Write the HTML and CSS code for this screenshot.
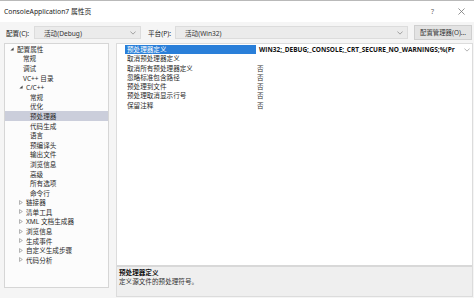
FILE: index.html
```html
<!DOCTYPE html>
<html lang="zh">
<head>
<meta charset="utf-8">
<link rel="stylesheet" href="styles.css">
</head>
<body>
<div class="dialog">
  <div class="titlebar">
    <span class="title">ConsoleApplication7 属性页</span>
    <span class="tb-btns"><span class="help">?</span><svg class="close" viewBox="0 0 8 8" width="7" height="7"><path d="M0.5 0.5 L7.5 7.5 M7.5 0.5 L0.5 7.5" stroke="#777" stroke-width="0.9"/></svg></span>
  </div>
  <div class="configrow">
    <span class="lbl">配置(C):</span>
    <div class="combo combo-cfg"><span>活动(Debug)</span><svg class="chev" viewBox="0 0 8 5" width="6" height="4"><path d="M0.5 0.5 L4 4 L7.5 0.5" fill="none" stroke="#888" stroke-width="1"/></svg></div>
    <span class="lbl lbl-plat">平台(P):</span>
    <div class="combo combo-plat"><span>活动(Win32)</span><svg class="chev" viewBox="0 0 8 5" width="6" height="4"><path d="M0.5 0.5 L4 4 L7.5 0.5" fill="none" stroke="#888" stroke-width="1"/></svg></div>
    <div class="btn">配置管理器(O)...</div>
  </div>
  <div class="main">
    <div class="tree">
      <div class="ti l1"><svg class="tri" viewBox="0 0 5 5" width="4" height="4"><polygon points="4.5,0.5 4.5,4.5 0.5,4.5" fill="#444"/></svg>配置属性</div>
      <div class="ti l2">常规</div>
      <div class="ti l2">调试</div>
      <div class="ti l2">VC++ 目录</div>
      <div class="ti l2e"><svg class="tri" viewBox="0 0 5 5" width="4" height="4"><polygon points="4.5,0.5 4.5,4.5 0.5,4.5" fill="#444"/></svg>C/C++</div>
      <div class="ti l3">常规</div>
      <div class="ti l3">优化</div>
      <div class="ti l3 sel">预处理器</div>
      <div class="ti l3">代码生成</div>
      <div class="ti l3">语言</div>
      <div class="ti l3">预编译头</div>
      <div class="ti l3">输出文件</div>
      <div class="ti l3">浏览信息</div>
      <div class="ti l3">高级</div>
      <div class="ti l3">所有选项</div>
      <div class="ti l3">命令行</div>
      <div class="ti l2e"><svg class="tri" viewBox="0 0 5 6" width="4" height="5"><polygon points="0.6,0.6 4.2,3 0.6,5.4" fill="none" stroke="#888" stroke-width="0.8"/></svg>链接器</div>
      <div class="ti l2e"><svg class="tri" viewBox="0 0 5 6" width="4" height="5"><polygon points="0.6,0.6 4.2,3 0.6,5.4" fill="none" stroke="#888" stroke-width="0.8"/></svg>清单工具</div>
      <div class="ti l2e"><svg class="tri" viewBox="0 0 5 6" width="4" height="5"><polygon points="0.6,0.6 4.2,3 0.6,5.4" fill="none" stroke="#888" stroke-width="0.8"/></svg>XML 文档生成器</div>
      <div class="ti l2e"><svg class="tri" viewBox="0 0 5 6" width="4" height="5"><polygon points="0.6,0.6 4.2,3 0.6,5.4" fill="none" stroke="#888" stroke-width="0.8"/></svg>浏览信息</div>
      <div class="ti l2e"><svg class="tri" viewBox="0 0 5 6" width="4" height="5"><polygon points="0.6,0.6 4.2,3 0.6,5.4" fill="none" stroke="#888" stroke-width="0.8"/></svg>生成事件</div>
      <div class="ti l2e"><svg class="tri" viewBox="0 0 5 6" width="4" height="5"><polygon points="0.6,0.6 4.2,3 0.6,5.4" fill="none" stroke="#888" stroke-width="0.8"/></svg>自定义生成步骤</div>
      <div class="ti l2e"><svg class="tri" viewBox="0 0 5 6" width="4" height="5"><polygon points="0.6,0.6 4.2,3 0.6,5.4" fill="none" stroke="#888" stroke-width="0.8"/></svg>代码分析</div>
    </div>
    <div class="right">
      <div class="grid">
        <div class="row selrow"><span class="name">预处理器定义</span><span class="val bold">WIN32;_DEBUG;_CONSOLE;_CRT_SECURE_NO_WARNINGS;%(Pr</span><span class="dd"><svg viewBox="0 0 8 5" width="6" height="4"><path d="M0.5 0.5 L4 4 L7.5 0.5" fill="none" stroke="#999" stroke-width="1"/></svg></span></div>
        <div class="row"><span class="name">取消预处理器定义</span><span class="val"></span></div>
        <div class="row"><span class="name">取消所有预处理器定义</span><span class="val">否</span></div>
        <div class="row"><span class="name">忽略标准包含路径</span><span class="val">否</span></div>
        <div class="row"><span class="name">预处理到文件</span><span class="val">否</span></div>
        <div class="row"><span class="name">预处理取消显示行号</span><span class="val">否</span></div>
        <div class="row"><span class="name">保留注释</span><span class="val">否</span></div>
      </div>
      <div class="desc">
        <div class="desc-title">预处理器定义</div>
        <div class="desc-text">定义源文件的预处理符号。</div>
      </div>
    </div>
  </div>
</div>
</body>
</html>
```
FILE: styles.css
```css
* { box-sizing: border-box; }
html, body { margin: 0; padding: 0; }
body {
  width: 474px;
  height: 298px;
  overflow: hidden;
  background: #f5f5f5;
  font-family: "Noto Sans", "Noto Sans CJK SC", sans-serif;
  color: #1e1e1e;
}
.dialog {
  width: 474px;
  height: 298px;
  display: grid;
  grid-template-rows: 21px 20px 256px;
  border-top: 1px solid #b9b9b9;
}
.titlebar {
  background: #ffffff;
  display: flex;
  align-items: center;
  justify-content: space-between;
  padding: 0 9px 1px 4px;
  font-size: 6.8px;
}
.title { color: #222; }
.tb-btns { display: flex; align-items: center; gap: 24px; color: #666; font-size: 7px; }
.close { display: block; }
.configrow {
  display: flex;
  align-items: center;
  padding: 1px 2px 0 6px;
  font-size: 6.6px;
}
.lbl { width: 28px; flex-shrink: 0; color: #222; }
.lbl-plat { margin-left: 7px; width: 27px; }
.combo {
  flex-shrink: 0;
  height: 13px;
  background: #ebebeb;
  border: 1px solid #dcdcdc;
  display: flex;
  align-items: center;
  justify-content: space-between;
  padding: 0 4px 0 9px;
  color: #333;
}
.combo-cfg { width: 107px; }
.combo-plat { width: 233px; }
.chev { display: block; }
.btn {
  flex-shrink: 0;
  margin-left: 6px;
  width: 58px;
  height: 15px;
  background: #e3e3e3;
  border: 1px solid #cfcfcf;
  display: flex;
  align-items: center;
  justify-content: center;
  color: #333;
  font-size: 6.4px;
}
.main {
  display: grid;
  grid-template-columns: 105px 1fr;
  grid-template-rows: 254px;
  column-gap: 7px;
  padding: 1px 1px 0 4px;
}
.tree {
  height: 245px;
  background: #fcfcfc;
  border: 1px solid #d6d6d6;
  font-size: 6.6px;
}
.ti {
  height: 9.6px;
  white-space: nowrap;
  color: #2a2a2a;
  display: flex;
  align-items: center;
}
.tri { display: block; flex-shrink: 0; margin-right: 3px; }
.l1 { padding-left: 5px; }
.l2 { padding-left: 18px; }
.l2e { padding-left: 14px; }
.l3 { padding-left: 25px; }
.sel { background: #cbcedb; }
.right {
  min-width: 0;
  display: grid;
  grid-template-rows: 221px 31px;
  border: 1px solid #dcdcdc;
}
.grid {
  background: #ffffff;
  padding: 1px 0 0 8px;
  font-size: 6.6px;
  overflow: hidden;
}
.row {
  display: flex;
  height: 9.3px;
  align-items: center;
}
.name {
  flex: 0 0 129px;
  padding-left: 2px;
  white-space: nowrap;
  color: #2a2a2a;
  line-height: 9.3px;
}
.selrow .name {
  background: #2a7fd9;
  color: #ffffff;
}
.val {
  flex: 1 1 auto;
  min-width: 0;
  padding-left: 3px;
  white-space: nowrap;
  overflow: hidden;
  color: #333;
  line-height: 9.3px;
}
.val.bold {
  font-family: "Open Sans", sans-serif;
  font-weight: 700;
  font-size: 6.5px;
  color: #111;
  border-left: 2px solid #2a7fd9;
}
.dd {
  flex: 0 0 10px;
  height: 9.3px;
  display: flex;
  align-items: center;
  justify-content: center;
}
.dd svg { display: block; }
.desc {
  background: #efefef;
  border-top: 2px solid #d8d8d8;
  padding: 1px 0 0 2px;
  font-size: 6.6px;
}
.desc-title { font-weight: 700; line-height: 9px; color: #111; }
.desc-text { line-height: 9px; color: #333; }
```
